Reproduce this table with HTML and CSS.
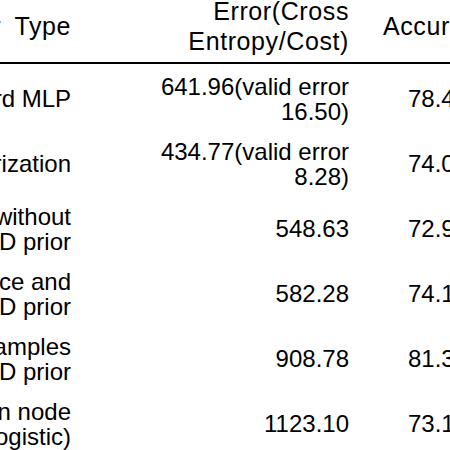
FILE: index.html
```html
<!DOCTYPE html>
<html>
<head>
<meta charset="utf-8">
<link rel="stylesheet" href="styles.css">
</head>
<body>
<div class="table">
  <div class="row head">
    <div class="c1"><div class="txt gap">Prior Type</div></div>
    <div class="c2"><div class="txt">Error(Cross<br>Entropy/Cost)</div></div>
    <div class="c3 hc3">Accuracy</div>
  </div>
  <div class="rule"></div>
  <div class="tbody">
    <div class="row">
      <div class="c1"><div class="txt">Standard MLP</div></div>
      <div class="c2"><div class="txt">641.96(valid error<br>16.50)</div></div>
      <div class="c3">78.45</div>
    </div>
    <div class="row">
      <div class="c1"><div class="txt">L2 Regularization</div></div>
      <div class="c2"><div class="txt">434.77(valid error<br>8.28)</div></div>
      <div class="c3">74.05</div>
    </div>
    <div class="row">
      <div class="c1"><div class="txt">Dropout without<br>GMD prior</div></div>
      <div class="c2"><div class="txt">548.63</div></div>
      <div class="c3">72.91</div>
    </div>
    <div class="row">
      <div class="c1"><div class="txt">Dropout with variance and<br>GMD prior</div></div>
      <div class="c2"><div class="txt">582.28</div></div>
      <div class="c3">74.16</div>
    </div>
    <div class="row">
      <div class="c1"><div class="txt">Dropout with more samples<br>GMD prior</div></div>
      <div class="c2"><div class="txt">908.78</div></div>
      <div class="c3">81.35</div>
    </div>
    <div class="row">
      <div class="c1"><div class="txt">Dropout with hidden node<br>sampling (logistic)</div></div>
      <div class="c2"><div class="txt">1123.10</div></div>
      <div class="c3">73.17</div>
    </div>
  </div>
</div>
</body>
</html>
```
FILE: styles.css
```css
html, body {
  margin: 0;
  padding: 0;
  background: #fff;
}
body {
  width: 450px;
  height: 450px;
  overflow: hidden;
  font-family: "Liberation Sans", Arial, sans-serif;
  color: #000;
}
.table {
  width: 450px;
}
.row {
  display: grid;
  grid-template-columns: 71px 278px 1fr;
  align-items: center;
  height: 65px;
  font-size: 24px;
  line-height: 25px;
  white-space: nowrap;
}
.head {
  height: 60px;
  margin-top: -4px;
  padding-bottom: 6px;
  font-size: 25px;
  line-height: 30px;
  letter-spacing: 0.6px;
}
.c1, .c2 {
  display: flex;
  justify-content: flex-end;
  min-width: 0;
}
.txt {
  text-align: right;
  white-space: nowrap;
}
.gap {
  word-spacing: 6px;
}
.c3 {
  padding-left: 59px;
  overflow: hidden;
}
.hc3 {
  padding-left: 34px;
}
.rule {
  height: 2px;
  background: #000;
}
.tbody {
  padding-top: 2px;
}
```
